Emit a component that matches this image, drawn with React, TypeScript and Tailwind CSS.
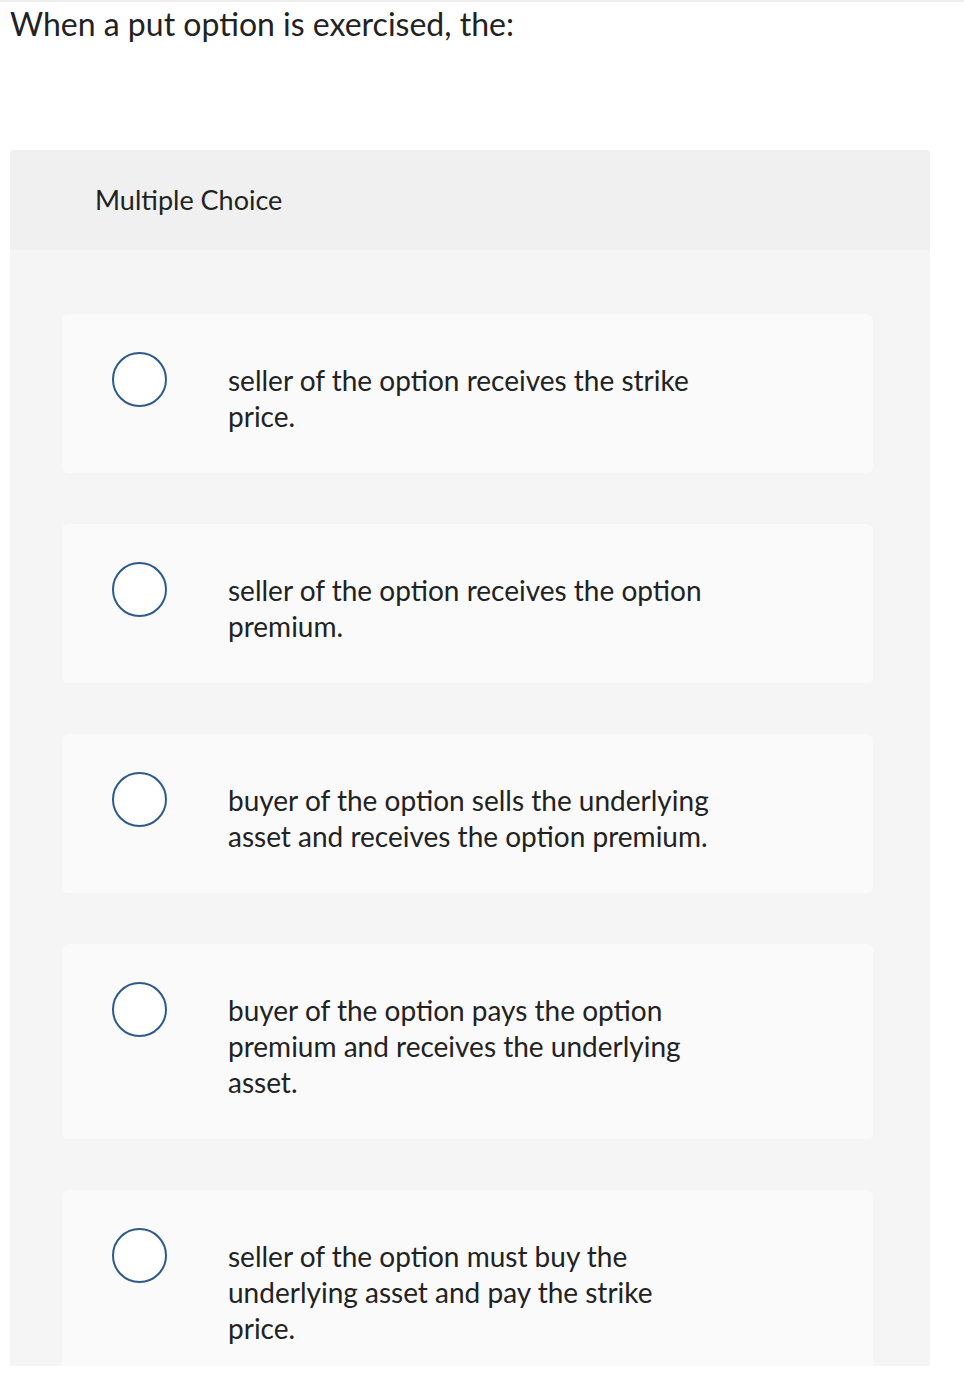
import React from "react";

const options: string[][] = [
  ["seller of the option receives the strike", "price."],
  ["seller of the option receives the option", "premium."],
  ["buyer of the option sells the underlying", "asset and receives the option premium."],
  ["buyer of the option pays the option", "premium and receives the underlying", "asset."],
  ["seller of the option must buy the", "underlying asset and pay the strike", "price."],
];

export default function App() {
  return (
    <div className="w-[964px] h-[1392px] bg-white text-[#222222] overflow-hidden" style={{ fontFamily: "Lato, 'Open Sans', sans-serif" }}>
      <div className="h-[2px] bg-[#eeeeee]" />
      <h1 className="pl-[10px] pt-[6px] text-[32px] leading-[32px] font-normal">When a put option is exercised, the:</h1>
      <div className="ml-[10px] mt-[110px] w-[920px] h-[1216px] overflow-hidden rounded-t-[4px] bg-[#f5f5f5]">
        <div className="h-[100px] bg-[#f0f0f0] pl-[85px] flex items-center">
          <span className="text-[27px] leading-[32px]">Multiple Choice</span>
        </div>
        <div className="pt-[64px] pl-[52px] pr-[57px] flex flex-col gap-[51px]">
          {options.map((lines, i) => (
            <div key={i} className="flex rounded-[6px] bg-[#fafafa] pl-[50px] pt-[38px] pb-[37px]">
              <div className="w-[55px] h-[55px] shrink-0 rounded-full border-2 border-[#2d5a8e] bg-white" />
              <div className="ml-[61px] pt-[10px] pb-[2px] text-[28px] leading-[36px]">
                {lines.map((l, j) => (
                  <div key={j}>{l}</div>
                ))}
              </div>
            </div>
          ))}
        </div>
      </div>
    </div>
  );
}
